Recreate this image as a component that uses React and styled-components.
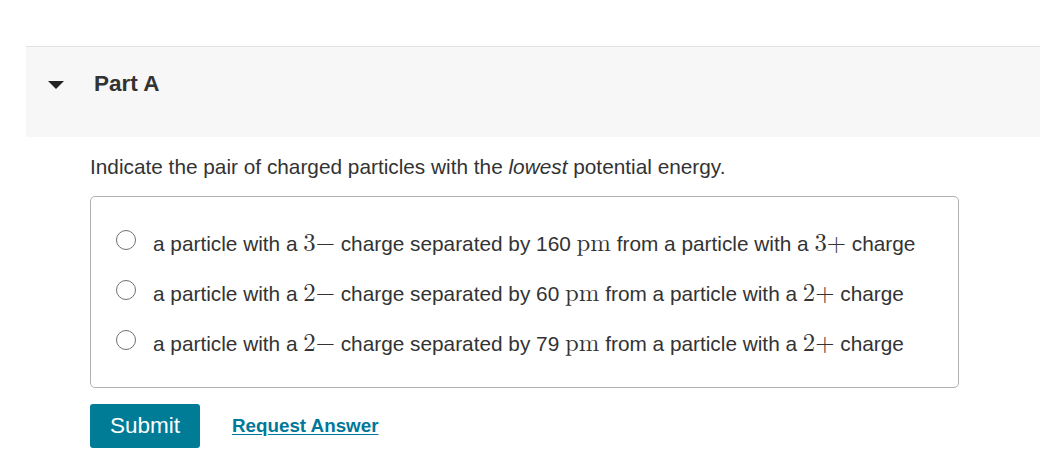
import React from "react";
import styled, { createGlobalStyle } from "styled-components";

const Global = createGlobalStyle`
  html, body { margin: 0; padding: 0; background: #fff; }
  body { font-family: "Liberation Sans", Arial, sans-serif; color: #333; }
`;

const Page = styled.div`
  width: 1040px;
  height: 461px;
  padding-top: 46px;
  padding-left: 26px;
  box-sizing: border-box;
  overflow: hidden;
`;

const PartHeader = styled.div`
  display: flex;
  align-items: center;
  height: 91px;
  background: #f7f7f7;
  border-top: 1px solid #e2e2e2;
  box-sizing: border-box;
  padding-left: 22px;
  padding-bottom: 16px;
`;

const Caret = styled.span`
  width: 0;
  height: 0;
  border-left: 8px solid transparent;
  border-right: 8px solid transparent;
  border-top: 8px solid #222;
  margin-right: 30px;
  margin-top: 1px;
`;

const PartTitle = styled.h2`
  margin: 0;
  font-size: 22.5px;
  font-weight: 700;
  color: #333;
  line-height: 1;
`;

const Body = styled.div`
  padding-left: 64px;
  padding-top: 16px;
`;

const Prompt = styled.p`
  margin: 0;
  font-size: 20.8px;
  line-height: 28px;
  color: #333;
`;

const OptionsBox = styled.div`
  margin-top: 15px;
  width: 869px;
  height: 192px;
  box-sizing: border-box;
  border: 1px solid #b0b0b0;
  border-radius: 5px;
  display: flex;
  flex-direction: column;
  padding-top: 29px;
  padding-left: 26px;
  gap: 22px;
`;

const Option = styled.label`
  display: flex;
  align-items: center;
  height: 28px;
  font-size: 20.8px;
  color: #333;
`;

const Radio = styled.span`
  width: 20px;
  height: 20px;
  border: 1.5px solid #707070;
  border-radius: 50%;
  box-sizing: border-box;
  margin-right: 17px;
  margin-left: -1px;
  flex: none;
`;

const M = styled.span`
  font-family: "Latin Modern Roman", "Liberation Serif", "DejaVu Serif", serif;
  font-size: 1.19em;
`;

const Actions = styled.div`
  display: flex;
  align-items: center;
  margin-top: 16px;
  gap: 32px;
`;

const SubmitButton = styled.button`
  width: 110px;
  height: 44px;
  background: #007c97;
  color: #fff;
  border: none;
  border-radius: 3px;
  font-family: "Liberation Sans", Arial, sans-serif;
  font-size: 22.5px;
  padding: 0;
`;

const Link = styled.a`
  color: #00789a;
  font-weight: 700;
  font-size: 18.8px;
  text-decoration: underline;
  text-underline-offset: 2px;
  cursor: pointer;
`;

const options = [
  { a: "3", d: "160", b: "3" },
  { a: "2", d: "60", b: "2" },
  { a: "2", d: "79", b: "2" },
];

export default function App() {
  return (
    <>
      <Global />
      <Page>
        <PartHeader>
          <Caret />
          <PartTitle>Part A</PartTitle>
        </PartHeader>
        <Body>
          <Prompt>
            Indicate the pair of charged particles with the <em>lowest</em> potential energy.
          </Prompt>
          <OptionsBox>
            {options.map((o, i) => (
              <Option key={i}>
                <Radio />
                <span>
                  a particle with a <M>{o.a}−</M> charge separated by {o.d}{" "}
                  <M>pm</M> from a particle with a <M>{o.b}+</M> charge
                </span>
              </Option>
            ))}
          </OptionsBox>
          <Actions>
            <SubmitButton>Submit</SubmitButton>
            <Link>Request Answer</Link>
          </Actions>
        </Body>
      </Page>
    </>
  );
}
